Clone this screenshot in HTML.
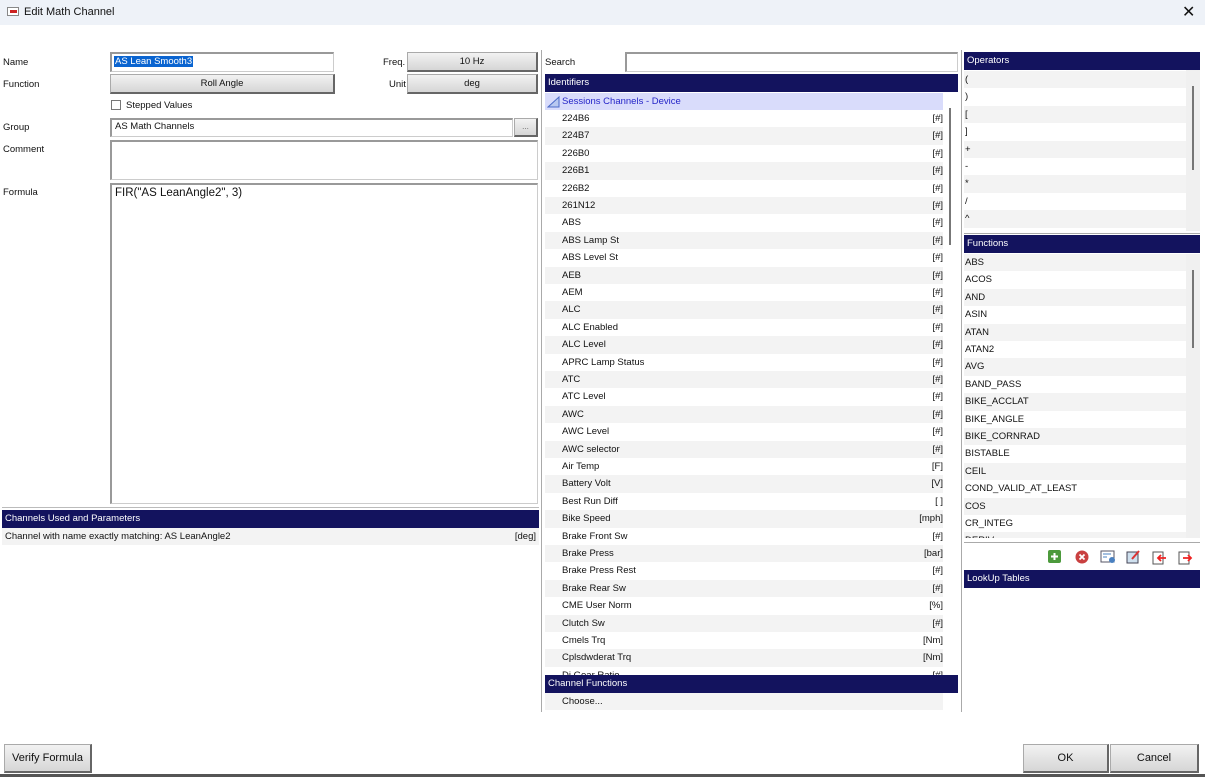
<!DOCTYPE html>
<html><head><meta charset="utf-8"><style>
*{box-sizing:border-box;margin:0;padding:0}
body{width:1205px;height:777px;position:relative;background:#fff;font-family:"Liberation Sans",sans-serif;font-size:9.5px;color:#111;overflow:hidden}
.a{position:absolute}
.lbl{position:absolute;font-size:9.5px}
.inp{position:absolute;background:#fff;border:1px solid #ccc;border-top:2px solid #999;border-left:2px solid #999}
.btn{position:absolute;background:linear-gradient(#f2f2f2,#d6d6d6);border:1px solid #aaa;border-right:2px solid #666;border-bottom:2px solid #666;text-align:center;font-size:9.5px}
.hdr{position:absolute;background:#13135e;color:#fff;font-size:9.5px;padding-left:3px;line-height:17px}
.row{position:absolute;height:17.4px;line-height:18px;font-size:9.5px}
.g{background:#f3f3f3}
</style></head><body>
<div class="a" style="left:0;top:0;width:1205px;height:25px;background:#eef2f8"></div>
<div class="a" style="left:7px;top:7px;width:12px;height:9px;border:1px solid #888;background:#fff"><div style="position:absolute;left:2px;top:2px;width:7px;height:3px;background:#c22"></div></div>
<div class="lbl" style="left:24px;top:6px;font-size:11px">Edit Math Channel</div>
<div class="lbl" style="left:1182px;top:2px;font-size:16px">✕</div>

<div class="lbl" style="left:3px;top:57px">Name</div>
<div class="lbl" style="left:3px;top:79px">Function</div>
<div class="lbl" style="left:3px;top:122px">Group</div>
<div class="lbl" style="left:3px;top:144px">Comment</div>
<div class="lbl" style="left:3px;top:187px">Formula</div>
<div class="inp" style="left:110px;top:52px;width:224px;height:20px"><span style="position:absolute;left:2px;top:2px;background:#0a64d0;color:#fff;padding:0 1px">AS Lean Smooth3</span></div>
<div class="lbl" style="left:383px;top:57px">Freq.</div>
<div class="btn" style="left:407px;top:52px;width:131px;height:20px;line-height:17px">10 Hz</div>
<div class="btn" style="left:110px;top:74px;width:225px;height:20px;line-height:17px">Roll Angle</div>
<div class="lbl" style="left:389px;top:79px">Unit</div>
<div class="btn" style="left:407px;top:74px;width:131px;height:20px;line-height:17px">deg</div>
<div class="a" style="left:111px;top:100px;width:10px;height:10px;border:1px solid #777;background:#fff"></div>
<div class="lbl" style="left:126px;top:100px">Stepped Values</div>
<div class="inp" style="left:110px;top:118px;width:403px;height:19px"><span style="position:absolute;left:3px;top:1px">AS Math Channels</span></div>
<div class="btn" style="left:514px;top:118px;width:24px;height:19px;line-height:16px;font-size:8px;color:#666">...</div>
<div class="inp" style="left:110px;top:140px;width:428px;height:40px"></div>
<div class="inp" style="left:110px;top:183px;width:428px;height:321px"><span style="position:absolute;left:3px;top:2px;font-size:11.5px">FIR("AS LeanAngle2", 3)</span></div>
<div class="a" style="left:2px;top:507px;width:537px;height:1px;background:#bbb"></div>
<div class="hdr" style="left:2px;top:510px;width:537px;height:18px">Channels Used and Parameters</div>
<div class="row g" style="left:2px;top:528px;width:537px;padding-left:3px">Channel with name exactly matching: AS LeanAngle2<span style="position:absolute;right:3px">[deg]</span></div>

<div class="a" style="left:541px;top:50px;width:1px;height:662px;background:#aaa"></div>
<div class="lbl" style="left:545px;top:57px">Search</div>
<div class="inp" style="left:625px;top:52px;width:333px;height:20px"></div>
<div class="hdr" style="left:545px;top:74px;width:413px;height:18px">Identifiers</div>
<div class="row" style="left:545px;top:93px;width:398px;background:#d9dcfb;color:#2525c8;padding-left:17px">Sessions Channels - Device</div>
<svg class="a" style="left:547px;top:96px" width="13" height="12"><path d="M1 11 L12 1 L12 11 Z" fill="#b8c8f0" stroke="#4a6ac8"/></svg>
<div class="a" style="left:949px;top:108px;width:2px;height:137px;background:#777"></div>
<div class="a" style="left:545px;top:110px;width:398px;height:565px;overflow:hidden"><div id="ids"></div></div>
<div class="hdr" style="left:545px;top:675px;width:413px;height:18px">Channel Functions</div>
<div class="row g" style="left:545px;top:693px;width:398px;padding-left:17px">Choose...</div>

<div class="a" style="left:961px;top:50px;width:1px;height:662px;background:#aaa"></div>
<div class="hdr" style="left:964px;top:52px;width:236px;height:18px">Operators</div>
<div class="a" style="left:1186px;top:70px;width:14px;height:161px;background:#f0f0f0"></div>
<div class="a" style="left:1192px;top:86px;width:2px;height:84px;background:#777"></div>
<div id="ops"></div>
<div class="a" style="left:964px;top:233px;width:236px;height:1px;background:#aaa"></div>
<div class="hdr" style="left:964px;top:235px;width:236px;height:18px">Functions</div>
<div class="a" style="left:1186px;top:254px;width:14px;height:284px;background:#f0f0f0"></div>
<div class="a" style="left:1192px;top:270px;width:2px;height:78px;background:#777"></div>
<div class="a" style="left:964px;top:254px;width:222px;height:284px;overflow:hidden"><div id="fns"></div></div>
<div class="a" style="left:964px;top:542px;width:236px;height:1px;background:#aaa"></div>
<svg class="a" style="left:1046px;top:549px" width="160" height="16">
<rect x="2" y="1" width="13" height="13" rx="2" fill="#4c9a3c"/><path d="M8.5 4v7M5 7.5h7" stroke="#fff" stroke-width="2"/>
<circle cx="36" cy="8" r="6.5" fill="#c94040"/><path d="M33.5 5.5l5 5M38.5 5.5l-5 5" stroke="#fff" stroke-width="1.8"/>
<rect x="55" y="2" width="13" height="11" fill="#fff" stroke="#556"/><path d="M57 5h8M57 8h4" stroke="#4a80c0"/><circle cx="66" cy="11" r="3" fill="#4a80c0"/>
<rect x="81" y="3" width="11" height="11" fill="#cfe0ee" stroke="#445"/><path d="M86 10l7-8" stroke="#d33" stroke-width="2"/>
<rect x="107" y="3" width="10" height="12" fill="#fff" stroke="#555"/><path d="M120 9h-7M115 6l-3 3 3 3" stroke="#e22" stroke-width="1.8" fill="none"/>
<rect x="133" y="3" width="10" height="12" fill="#fff" stroke="#555"/><path d="M137 9h8M142 6l3 3-3 3" stroke="#e22" stroke-width="1.8" fill="none"/>
</svg>
<div class="hdr" style="left:964px;top:570px;width:236px;height:18px">LookUp Tables</div>

<div class="btn" style="left:4px;top:744px;width:88px;height:29px;line-height:26px;font-size:11px">Verify Formula</div>
<div class="btn" style="left:1023px;top:744px;width:86px;height:29px;line-height:26px;font-size:11px">OK</div>
<div class="btn" style="left:1110px;top:744px;width:89px;height:29px;line-height:26px;font-size:11px">Cancel</div>
<div class="a" style="left:0;top:774px;width:1205px;height:3px;background:#555"></div>
<script>
var ids=[["224B6","[#]"],["224B7","[#]"],["226B0","[#]"],["226B1","[#]"],["226B2","[#]"],["261N12","[#]"],["ABS","[#]"],["ABS Lamp St","[#]"],["ABS Level St","[#]"],["AEB","[#]"],["AEM","[#]"],["ALC","[#]"],["ALC Enabled","[#]"],["ALC Level","[#]"],["APRC Lamp Status","[#]"],["ATC","[#]"],["ATC Level","[#]"],["AWC","[#]"],["AWC Level","[#]"],["AWC selector","[#]"],["Air Temp","[F]"],["Battery Volt","[V]"],["Best Run Diff","[ ]"],["Bike Speed","[mph]"],["Brake Front Sw","[#]"],["Brake Press","[bar]"],["Brake Press Rest","[#]"],["Brake Rear Sw","[#]"],["CME User Norm","[%]"],["Clutch Sw","[#]"],["Cmels Trq","[Nm]"],["Cplsdwderat Trq","[Nm]"],["Di Gear Ratio","[#]"]];
var h="";ids.forEach(function(r,i){h+='<div class="row'+(i%2?' g':'')+'" style="left:0;top:'+(i*17.4)+'px;width:398px;padding-left:17px">'+r[0]+'<span style="position:absolute;right:0">'+r[1]+'</span></div>';});
document.getElementById("ids").outerHTML=h;
var ops=["(",")","[","]","+","-","*","/","^"];h="";
ops.forEach(function(o,i){h+='<div class="row'+(i%2?'':' g')+'" style="left:964px;top:'+(71+i*17.4)+'px;width:222px;padding-left:1px">'+o+'</div>';});
document.getElementById("ops").outerHTML=h;
var f=["ABS","ACOS","AND","ASIN","ATAN","ATAN2","AVG","BAND_PASS","BIKE_ACCLAT","BIKE_ANGLE","BIKE_CORNRAD","BISTABLE","CEIL","COND_VALID_AT_LEAST","COS","CR_INTEG","DERIV"];h="";
f.forEach(function(o,i){h+='<div class="row'+(i%2?'':' g')+'" style="left:0;top:'+(i*17.4)+'px;width:222px;padding-left:1px">'+o+'</div>';});
document.getElementById("fns").outerHTML=h;
</script>
</body></html>
